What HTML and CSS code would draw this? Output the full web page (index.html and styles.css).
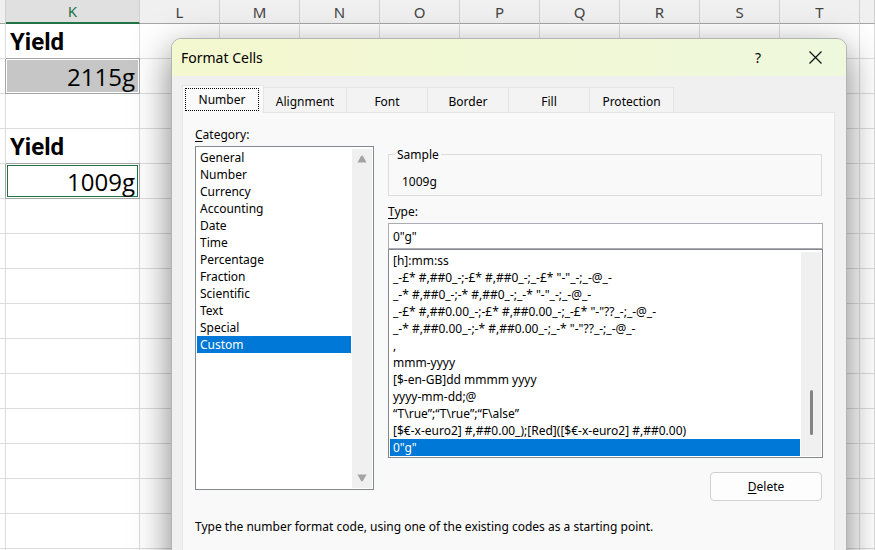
FILE: index.html
```
<!DOCTYPE html>
<html lang="en">

<head>
    <meta charset="UTF-8">
    <title>Format Cells</title>
    <link rel="stylesheet" href="styles.css">
</head>

<body>
    <table class="sheet">
        <colgroup>
            <col class="col-edge">
            <col class="col-wide">
            <col span="9" class="col-normal">
            <col>
        </colgroup>
        <thead>
            <tr>
                <th></th>
                <th class="current">K</th>
                <th>L</th>
                <th>M</th>
                <th>N</th>
                <th>O</th>
                <th>P</th>
                <th>Q</th>
                <th>R</th>
                <th>S</th>
                <th>T</th>
                <th></th>
            </tr>
        </thead>
        <tbody id="rows"></tbody>
    </table>

    <div class="dialog" role="dialog" aria-labelledby="dialog-title">
        <div class="titlebar">
            <span id="dialog-title" class="title">Format Cells</span>
            <button class="title-button" type="button" aria-label="Help">?</button>
            <button class="title-button" type="button" aria-label="Close">
                <svg width="13" height="13" viewBox="0 0 13 13">
                    <path d="M.5 .5L12.5 12.5M12.5 .5L.5 12.5" stroke="#111" stroke-width="1.2" fill="none" />
                </svg>
            </button>
        </div>

        <div class="tabs" role="tablist">
            <button class="tab active" type="button" role="tab" aria-selected="true"><span class="focus">Number</span></button>
            <button class="tab" type="button" role="tab">Alignment</button>
            <button class="tab" type="button" role="tab">Font</button>
            <button class="tab" type="button" role="tab">Border</button>
            <button class="tab" type="button" role="tab">Fill</button>
            <button class="tab tab-last" type="button" role="tab">Protection</button>
        </div>

        <div class="panel">
            <div class="columns">
                <div class="category">
                    <label for="category"><u>C</u>ategory:</label>
                    <div class="listbox category-list">
                        <select id="category" size="12">
                            <option>General</option>
                            <option>Number</option>
                            <option>Currency</option>
                            <option>Accounting</option>
                            <option>Date</option>
                            <option>Time</option>
                            <option>Percentage</option>
                            <option>Fraction</option>
                            <option>Scientific</option>
                            <option>Text</option>
                            <option>Special</option>
                            <option selected>Custom</option>
                        </select>
                        <div class="scrollbar">
                            <svg width="10" height="8" viewBox="0 0 10 8">
                                <path d="M5 0.5Q5.6 .5 6 1.2L9.6 7.5H.4L4 1.2Q4.4 .5 5 .5Z" fill="#a3a3a3" />
                            </svg>
                            <svg width="10" height="8" viewBox="0 0 10 8">
                                <path d="M5 7.5Q4.4 7.5 4 6.8L.4 .5H9.6L6 6.8Q5.6 7.5 5 7.5Z" fill="#a3a3a3" />
                            </svg>
                        </div>
                    </div>
                </div>

                <div class="details">
                    <fieldset>
                        <legend>Sample</legend>
                        <output>1009g</output>
                    </fieldset>
                    <label for="type"><u>T</u>ype:</label>
                    <input id="type" type="text" value='0"g"'>
                    <div class="listbox">
                        <select size="12" aria-label="Type">
                            <option>[h]:mm:ss</option>
                            <option>_-£* #,##0_-;-£* #,##0_-;_-£* "-"_-;_-@_-</option>
                            <option>_-* #,##0_-;-* #,##0_-;_-* "-"_-;_-@_-</option>
                            <option>_-£* #,##0.00_-;-£* #,##0.00_-;_-£* "-"??_-;_-@_-</option>
                            <option>_-* #,##0.00_-;-* #,##0.00_-;_-* "-"??_-;_-@_-</option>
                            <option>,</option>
                            <option>mmm-yyyy</option>
                            <option>[$-en-GB]dd mmmm yyyy</option>
                            <option>yyyy-mm-dd;@</option>
                            <option>“T\rue”;“T\rue”;“F\alse”</option>
                            <option>[$€-x-euro2] #,##0.00_);[Red]([$€-x-euro2] #,##0.00)</option>
                            <option selected>0"g"</option>
                        </select>
                        <div class="scrollbar">
                            <div class="thumb"></div>
                        </div>
                    </div>
                    <button class="delete" type="button"><u>D</u>elete</button>
                </div>
            </div>
            <p class="hint">Type the number format code, using one of the existing codes as a starting point.</p>
        </div>
    </div>

    <script>
        // Values of column K, by row
        const cells = {
            0: '<td class="heading">Yield</td>',
            1: '<td class="value"><div class="copied">2115g</div></td>',
            3: '<td class="heading">Yield</td>',
            4: '<td class="value"><div class="selected">1009g</div></td>'
        };

        let html = '';
        for (let row = 0; row < 16; row++) {
            html += '<tr><td></td>' + (cells[row] || '<td></td>') + '<td></td>'.repeat(10) + '</tr>';
        }
        document.getElementById('rows').innerHTML = html;
    </script>
</body>

</html>
```
FILE: styles.css
```
* {
    box-sizing: border-box;
}

html,
body {
    height: 100%;
    margin: 0;
    overflow: hidden;
}

body {
    position: relative;
    background-color: #fff;
    color: #000;
    font-family: "Noto Sans", sans-serif;
    font-size: 12px;
    line-height: 17px;
}

button,
input,
select {
    margin: 0;
    color: inherit;
    font: inherit;
}

/* Worksheet */

.sheet {
    width: 100%;
    table-layout: fixed;
    border-collapse: separate;
    border-spacing: 0;
}

.col-edge {
    width: 6px;
}

.col-wide {
    width: 134px;
}

.col-normal {
    width: 80px;
}

.sheet th {
    height: 24px;
    padding: 0;
    border-right: 1px solid #d0d0d0;
    border-bottom: 1px solid #a6a6a6;
    background-color: #f0f0f0;
    color: #444;
    font-size: 15px;
    font-weight: normal;
    line-height: 22px;
}

.sheet th.current {
    border-bottom: 2px solid #217346;
    background-color: #e0e0e0;
    color: #217346;
}

.sheet td {
    height: 35px;
    padding: 0;
    border-right: 1px solid #dcdcdc;
    border-bottom: 1px solid #dcdcdc;
    white-space: nowrap;
}

.sheet .heading {
    padding: 3px 0 0 4px;
    font-family: Roboto, sans-serif;
    font-size: 24px;
    font-weight: bold;
    line-height: 31px;
}

.sheet .value {
    border-color: #a6a6a6;
    box-shadow: 0 -1px #a6a6a6, -1px 0 #a6a6a6;
    font-family: "Open Sans", sans-serif;
    font-size: 24px;
    line-height: 34px;
    text-align: right;
}

.copied,
.selected {
    height: 32px;
    margin: 1px;
    padding-right: 3px;
}

.copied {
    background-color: #c6c6c6;
}

.selected {
    border: 1px solid #217346;
    padding-right: 2px;
    line-height: 32px;
}

/* Dialog */

.dialog {
    position: absolute;
    top: 38px;
    right: 28px;
    bottom: -60px;
    left: 171px;
    display: flex;
    flex-direction: column;
    overflow: hidden;
    border: 1px solid #b4b4b4;
    border-radius: 10px;
    background-color: #f0f0f0;
    box-shadow: 0 12px 36px rgba(0, 0, 0, 0.5);
}

.titlebar {
    display: flex;
    align-items: center;
    height: 37px;
    padding: 0 9px;
    background-image: linear-gradient(to right, #f4f8cf, #eef8dc);
}

.title {
    flex: 1;
    font-size: 14px;
}

.title-button {
    display: flex;
    align-items: center;
    justify-content: center;
    width: 44px;
    height: 36px;
    margin-left: 13px;
    padding: 0;
    border: none;
    background: none;
    font-size: 14px;
}

.tabs {
    display: flex;
    align-items: flex-end;
    height: 36px;
    padding-left: 10px;
}

.tab {
    width: 81px;
    height: 25px;
    padding: 3px 0 0;
    border: 1px solid #e5e5e5;
    border-left: none;
    border-bottom: none;
    background-color: #f3f3f3;
}

/* the open tab covers the line below it */
.tab.active {
    z-index: 1;
    width: 82px;
    height: 28px;
    margin-bottom: -1px;
    padding: 0 0 1px;
    border-left: 1px solid #e5e5e5;
    background-color: #f9f9f9;
}

.tab:nth-child(2) {
    width: 83px;
}

.tab-last {
    width: 84px;
}

.focus {
    display: block;
    height: 23px;
    margin: 0 4px 0 2px;
    border: 1px dotted #000;
    line-height: 21px;
}

.panel {
    flex: 1;
    margin: 0 11px 0 10px;
    padding: 13px 11px 0 12px;
    border: 1px solid #e5e5e5;
    background-color: #f9f9f9;
}

.columns {
    display: flex;
    gap: 14px;
}

.category {
    width: 179px;
}

.details {
    display: flex;
    flex: 1;
    flex-direction: column;
}

label {
    display: block;
    height: 20px;
}

u {
    text-underline-offset: 2px;
}

.listbox {
    display: flex;
    padding: 2px 1px 1px;
    border: 1px solid #828790;
    background-color: #fff;
}

.category-list {
    height: 344px;
}

.listbox select {
    flex: 1;
    min-width: 0;
    height: 204px;
    padding: 0;
    overflow: hidden;
    border: none;
    border-radius: 0;
    outline: none;
    background: none;
    appearance: none;
}

.listbox option {
    height: 17px;
    min-height: 17px;
    padding: 0 3px;
    border-radius: 0;
    line-height: 17px;
}

.listbox option:checked {
    background: #0078d7 linear-gradient(#0078d7, #0078d7);
    color: #fff;
}

.scrollbar {
    display: flex;
    flex-direction: column;
    align-items: center;
    justify-content: space-between;
    width: 20px;
    margin-left: 1px;
    padding: 6px 0;
    background-color: #f0f0f0;
}

.thumb {
    width: 3px;
    height: 45px;
    margin: auto 0 15px;
    border-radius: 2px;
    background-color: #858585;
}

fieldset {
    height: 50px;
    margin: 20px 1px 7px 0;
    padding: 10px 13px 0;
    border: 1px solid #dcdcdc;
}

legend {
    margin-left: -7px;
    padding: 0 2px;
}

input {
    height: 26px;
    padding: 0 4px;
    border: 1px solid #abadb3;
    border-radius: 0;
    background-color: #fff;
}

.delete {
    align-self: flex-end;
    width: 112px;
    height: 29px;
    margin: 14px 1px 0 0;
    padding: 0;
    border: 1px solid #d0d0d0;
    border-radius: 4px;
    background-color: #fdfdfd;
}

.hint {
    margin: 17px 0 0;
}
```
